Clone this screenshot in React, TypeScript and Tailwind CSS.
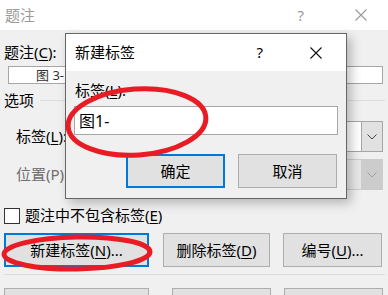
import React from 'react';

const font = { fontFamily: '"Noto Sans", "Noto Sans CJK SC", sans-serif' };

// underlined access-key letter
const K: React.FC<{ c: string }> = ({ c }) => <span className="underline underline-offset-2">{c}</span>;

const XIcon: React.FC<{ color: string }> = ({ color }) => (
    <svg width="12" height="12" viewBox="0 0 12 12">
        <path d="M0.5 0.5L11.5 11.5M11.5 0.5L0.5 11.5" stroke={color} strokeWidth="1.1" fill="none" />
    </svg>
);

const Chevron: React.FC<{ color: string }> = ({ color }) => (
    <svg width="10" height="6" viewBox="0 0 10 6">
        <path d="M0.5 0.5L5 5L9.5 0.5" stroke={color} strokeWidth="1" fill="none" />
    </svg>
);

const Btn: React.FC<{ primary?: boolean; className?: string; children: React.ReactNode }> = ({ primary, className, children }) => (
    <div
        className={
            'flex items-center justify-center bg-[#e1e1e1] text-[15px] leading-none text-black ' +
            (primary ? 'border-2 border-[#0078d7] ' : 'border border-[#adadad] ') +
            (className ?? '')
        }
    >
        {children}
    </div>
);

const App: React.FC = () => {
    return (
        <div className="relative w-[388px] h-[295px] overflow-hidden bg-[#f0f0f0]" style={font}>
            {/* background dialog: 题注 */}
            <div className="flex h-[30px] items-center bg-white">
                <span className="pl-[5px] text-[15px] leading-none text-[#9a9a9a]">题注</span>
                <span className="ml-auto text-[15px] leading-none text-[#9a9a9a]">?</span>
                <div className="ml-[51px] mr-[21px]">
                    <XIcon color="#9a9a9a" />
                </div>
            </div>

            <div className="flex flex-col">
                <div className="mt-[11px] flex h-[22px] items-center pl-[4px] text-[15px] leading-none">
                    题注(<K c="C" />):
                </div>
                <div className="ml-[8px] mt-[3px] flex h-[18px] w-[375px] items-center border border-[#a6a6a6] bg-white pl-[27px] text-[13px] leading-none text-[#333]">
                    图 3-
                </div>
                <div className="mt-[6px] flex h-[20px] items-center pl-[4px]">
                    <span className="text-[15px] leading-none">选项</span>
                    <div className="ml-[6px] mr-[3px] h-px flex-1 bg-[#dcdcdc]" />
                </div>
                <div className="mt-[11px] flex h-[31px] items-center pl-[16px]">
                    <span className="text-[15px] leading-none">标签(<K c="L" />):</span>
                    <div className="ml-auto mr-[5px] flex h-full w-[280px] border border-[#a6a6a6] bg-white">
                        <div className="ml-auto flex w-[21px] items-center justify-center border-l border-[#a6a6a6] bg-[#e1e1e1]">
                            <Chevron color="#444" />
                        </div>
                    </div>
                </div>
                <div className="mt-[7px] flex h-[31px] items-center pl-[16px]">
                    <span className="text-[15px] leading-none text-[#6d6d6d]">位置(P)</span>
                    <div className="ml-auto mr-[5px] flex h-full w-[280px] border border-[#cccccc] bg-[#e8e8e8]">
                        <div className="ml-auto flex w-[21px] items-center justify-center bg-[#cccccc]">
                            <Chevron color="#a0a0a0" />
                        </div>
                    </div>
                </div>
                <div className="mt-[17px] flex h-[17px] items-center pl-[4px]">
                    <div className="h-[16px] w-[16px] border border-[#333] bg-white" />
                    <span className="ml-[5px] text-[15px] leading-none">
                        题注中不包含标签(<K c="E" />)
                    </span>
                </div>
                <div className="mt-[9px] flex h-[34px] pl-[4px]">
                    <Btn primary className="w-[145px]">
                        新建标签(<K c="N" />)...
                    </Btn>
                    <Btn className="ml-[14px] w-[107px]">
                        删除标签(<K c="D" />)
                    </Btn>
                    <Btn className="ml-[13px] w-[99px]">
                        编号(<K c="U" />)...
                    </Btn>
                </div>
                <div className="ml-[4px] mt-[7px] h-px w-[381px] bg-[#dcdcdc]" />
                <div className="mt-[13px] flex h-[34px] pl-[4px]">
                    <Btn className="w-[145px]">&nbsp;</Btn>
                    <Btn className="ml-[23px] w-[99px]">&nbsp;</Btn>
                    <Btn className="ml-[13px] w-[99px]">&nbsp;</Btn>
                </div>
            </div>

            {/* front dialog: 新建标签 */}
            <div className="absolute left-[65px] top-[33px] flex h-[166px] w-[282px] flex-col border border-[#666] bg-[#f0f0f0] shadow-[4px_4px_10px_rgba(0,0,0,0.25)]">
                <div className="flex h-[37px] items-center bg-white">
                    <span className="pl-[9px] text-[15px] leading-none">新建标签</span>
                    <span className="ml-auto text-[15px] leading-none">?</span>
                    <div className="ml-[47px] mr-[24px]">
                        <XIcon color="#111" />
                    </div>
                </div>
                <div className="mt-[9px] flex h-[20px] items-center pl-[9px] text-[15px] leading-none">
                    标签(<K c="L" />):
                </div>
                <div className="ml-[8px] mt-[6px] flex h-[29px] w-[264px] items-center border border-[#a6a6a6] bg-white pl-[4px] text-[16px] leading-none">
                    图1-
                </div>
                <div className="mt-[19px] flex h-[34px]">
                    <Btn primary className="ml-[60px] w-[99px]">确定</Btn>
                    <Btn className="ml-[13px] w-[99px]">取消</Btn>
                </div>
            </div>

            {/* red hand-drawn ellipses */}
            <svg className="pointer-events-none absolute left-0 top-0" width="388" height="295" viewBox="0 0 388 295">
                <ellipse cx="137" cy="122" rx="69" ry="33" fill="none" stroke="#e81c24" strokeWidth="5" transform="rotate(-4 137 122)" />
                <ellipse cx="77" cy="253" rx="73" ry="16" fill="none" stroke="#e81c24" strokeWidth="5" transform="rotate(-1 77 253)" />
            </svg>
        </div>
    );
};

export default App;
